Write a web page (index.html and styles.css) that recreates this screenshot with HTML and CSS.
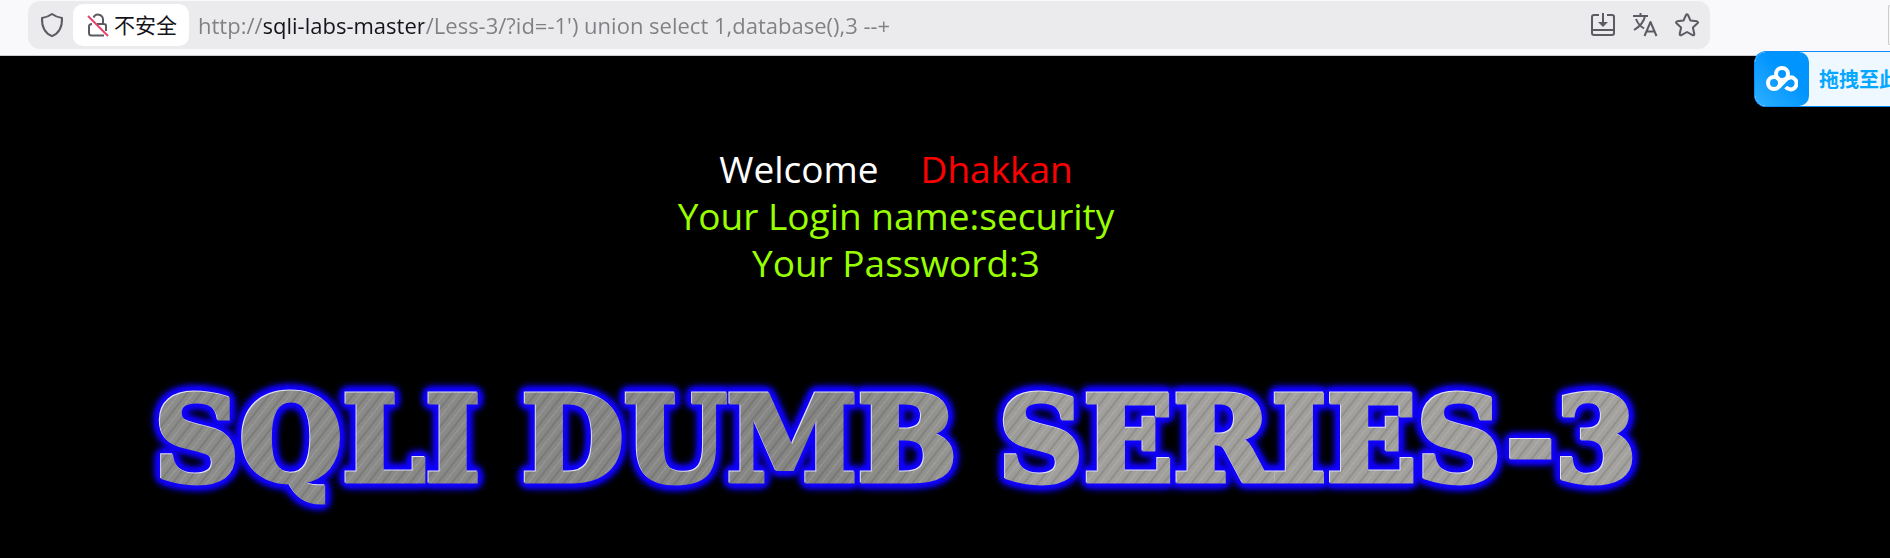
FILE: index.html
```html
<!DOCTYPE html>
<html lang="en">
<head>
    <meta charset="UTF-8">
    <meta name="viewport" content="width=device-width, initial-scale=1.0">
    <title>Less-3 Error Based- String (with Twist)</title>
    <link rel="stylesheet" href="styles.css">
</head>
<body>
    <header class="toolbar">
        <form class="urlbar">
            <button type="button" class="icon-btn shield" aria-label="Tracking protection">
                <svg width="24" height="26" viewBox="0 0 24 26"><path d="M12 2 C15 4.200 18.500 5.500 22 6 C22.300 14 19.500 21 12 24.200 C4.500 21 1.700 14 2 6 C5.500 5.500 9 4.200 12 2 Z"/></svg>
            </button>
            <button type="button" class="identity">
                <svg width="22" height="26" viewBox="0 0 22 26">
                    <path d="M6.500 5.500 A5 5 0 0 1 16 7 V12 M10 12 H17 Q19 12 19 14 V19 M5 12 Q2 12 2 14.500 V21 Q2 23.500 4.500 23.500 H17"/>
                    <path class="slash" d="M1 4 L21 24"/>
                </svg>
                <span>不安全</span>
            </button>
            <input class="url" type="text" aria-label="Address" spellcheck="false" value="http://sqli-labs-master/Less-3/?id=-1') union select 1,database(),3 --+">
            <div class="actions">
                <button type="button" class="icon-btn" aria-label="Install">
                    <svg width="26" height="26" viewBox="0 0 26 26">
                        <path d="M9 3 H4 Q2 3 2 5 V21 Q2 23 4 23 H22 Q24 23 24 21 V5 Q24 3 22 3 H17 M2 18 H24 M13 1 V13"/>
                        <path class="solid" d="M8 10 H18 L13 15 Z"/>
                    </svg>
                </button>
                <button type="button" class="icon-btn" aria-label="Translate">
                    <svg width="26" height="26" viewBox="0 0 26 26"><path d="M1 4 H16 M8.500 1 V4 M13 4 C12 10 7 15 2 18 M4 7 C5.500 11 8.500 14.500 12 16.500 M12.500 24 L18.500 10 L24.500 24 M14.500 19.500 H22.500"/></svg>
                </button>
                <button type="button" class="icon-btn" aria-label="Bookmark">
                    <svg width="26" height="26" viewBox="0 0 26 26"><path d="M12 3 Q13 1.500 14 3 L16.500 8.600 L23 9.300 Q24.700 10 23.500 11.300 L18.900 15.500 L20.300 22 Q20.200 23.800 18.600 23.200 L13 20 L7.400 23.200 Q5.800 23.800 5.700 22 L7.100 15.500 L2.500 11.300 Q1.300 10 3 9.300 L9.500 8.600 Z"/></svg>
                </button>
            </div>
        </form>
        <button type="button" class="side-btn" aria-label="More"></button>
    </header>

    <main class="page">
        <div class="welcome">
            <p>Welcome<span class="name">Dhakkan</span></p>
            <p class="result">Your Login name:security</p>
            <p class="result">Your Password:3</p>
        </div>
        <h1 class="banner"><span>SQLI DUMB SERIES-3</span></h1>
    </main>

    <a class="upload" href="#">
        <span class="upload-icon">
            <svg width="32" height="26" viewBox="0 0 32 26">
                <circle cx="16" cy="8" r="6"/>
                <circle cx="8" cy="17" r="6"/>
                <path d="M12.500 21 L20 13.500 A6 6 0 1 1 19.800 21"/>
            </svg>
        </span>
        <span class="upload-text">拖拽至此</span>
    </a>
</body>
</html>
```
FILE: styles.css
```css
* {
    margin: 0;
    padding: 0;
    box-sizing: border-box;
}

body {
    min-height: 100vh;
    background: #000;
    color: #fff;
    font-family: "Open Sans", "Noto Sans", "Noto Sans CJK SC", sans-serif;
    overflow: hidden;
    position: relative;
}

button {
    border: none;
    background: none;
    font: inherit;
}

svg {
    display: block;
    fill: none;
    stroke: #5b5b63;
    stroke-width: 2;
    stroke-linejoin: round;
}

/* Address bar */
.toolbar {
    display: flex;
    align-items: center;
    height: 56px;
    padding: 1px 0 6px 28px;
    background: #f9f9fb;
    border-bottom: 1px solid #ccc;
}

.urlbar {
    flex: 1;
    display: flex;
    align-items: center;
    height: 48px;
    padding: 0 10px 0 12px;
    background: #ebebed;
    border-radius: 12px;
}

.icon-btn svg {
    stroke-width: 2;
}

.icon-btn .solid {
    fill: #5b5b63;
    stroke: none;
}

.identity {
    display: flex;
    align-items: center;
    gap: 5px;
    height: 42px;
    margin-left: 9px;
    padding: 0 12px 0 14px;
    background: #fff;
    border-radius: 10px;
    font-family: "Noto Sans CJK SC", sans-serif;
    font-size: 21px;
    line-height: 30px;
    color: #15141a;
}

.identity span {
    padding-bottom: 2px;
}

.identity .slash {
    stroke: #e8436a;
}

/* the host part is darker than the rest of the address */
.url {
    flex: 1;
    min-width: 0;
    height: 42px;
    margin-left: 9px;
    border: none;
    outline: none;
    font-family: "Open Sans", "Noto Sans", sans-serif;
    font-size: 22px;
    color: transparent;
    background: linear-gradient(90deg, #808084 66px, #15141a 66px, #15141a 226px, #808084 226px);
    -webkit-background-clip: text;
    background-clip: text;
}

.actions {
    display: flex;
    gap: 16px;
}

.side-btn {
    width: 2px;
    height: 40px;
    margin-left: 178px;
    border: 1px solid #ccc;
    border-right: none;
    border-radius: 4px 0 0 4px;
}

/* Page */
.page {
    padding: 89px 98px 0 0;
    text-align: center;
}

.welcome {
    font-size: 37px;
    line-height: 47px;
}

.name {
    margin-left: 42px;
    color: #f00;
}

.result {
    color: #9f0;
}

.banner {
    margin-top: 84px;
    font-family: "DejaVu Serif", serif;
    font-size: 118px;
    font-weight: bold;
    line-height: 140px;
    white-space: nowrap;
    filter: drop-shadow(-1px -1px 0 #e4e4f0) drop-shadow(0 0 3px #10f) drop-shadow(0 0 3px #10f) drop-shadow(0 0 2px #10f) drop-shadow(0 0 2px #10f);
}

.banner span {
    color: transparent;
    -webkit-text-stroke: 5px transparent;
    background:
        repeating-linear-gradient(128deg, rgba(255, 255, 255, 0.1) 0 1px, transparent 2px 5px, rgba(0, 0, 0, 0.1) 6px 7px, transparent 8px 11px),
        linear-gradient(90deg, #8c8c8a, #858583 45%, #a09f9b 60%, #a3a29e);
    -webkit-background-clip: text;
    background-clip: text;
}

/* Floating upload widget */
.upload {
    position: absolute;
    top: 51px;
    right: 0;
    display: flex;
    width: 136px;
    height: 56px;
    overflow: hidden;
    background: #f0f8ff;
    border: 1px solid #0a8cff;
    border-right: none;
    border-radius: 12px 0 0 12px;
    text-decoration: none;
}

.upload-icon {
    flex: none;
    display: flex;
    align-items: center;
    justify-content: center;
    width: 54px;
    background: linear-gradient(45deg, #2eb0ff, #0094ff 60%);
    border-radius: 10px;
}

.upload-icon svg {
    stroke: #fff;
    stroke-width: 4;
}

.upload-text {
    margin-left: 10px;
    font-family: "Noto Sans CJK SC", sans-serif;
    font-size: 20px;
    font-weight: bold;
    line-height: 54px;
    white-space: nowrap;
    color: #06a7ff;
}
```
